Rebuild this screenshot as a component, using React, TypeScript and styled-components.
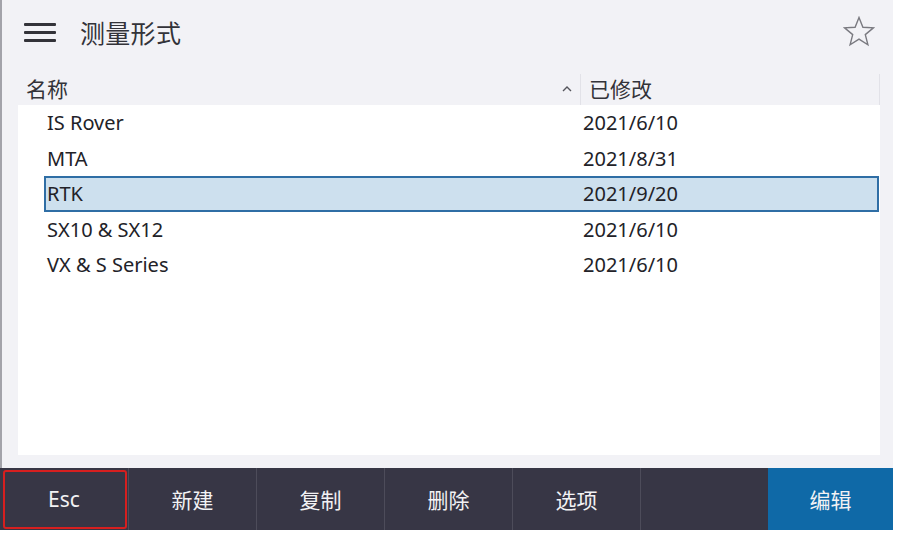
import React from "react";
import styled, { createGlobalStyle } from "styled-components";

const GlobalStyle = createGlobalStyle`
  html, body {
    margin: 0;
    padding: 0;
    background: #ffffff;
  }
  body {
    font-family: "Noto Sans", "Noto Sans CJK SC", sans-serif;
  }
`;

const Frame = styled.div`
  width: 893px;
  height: 530px;
  display: flex;
  flex-direction: column;
  background: #f2f2f6;
`;

const Upper = styled.div`
  flex: 1;
  display: flex;
  flex-direction: column;
  border-left: 2px solid #a3a3aa;
  padding-bottom: 13px;
  min-height: 0;
`;

const TitleBar = styled.div`
  height: 74px;
  display: flex;
  align-items: center;
  padding: 0 18px 10px 22px;
  box-sizing: border-box;
`;

const MenuButton = styled.div`
  width: 32px;
  display: flex;
  flex-direction: column;
  gap: 5px;
  margin-right: 24px;

  > span {
    height: 3px;
    background: #333339;
    border-radius: 1px;
  }
`;

const Title = styled.div`
  flex: 1;
  font-size: 25px;
  color: #333339;
  letter-spacing: 0.3px;
`;

const StarButton = styled.div`
  width: 32px;
  height: 32px;
  margin-bottom: 2px;
  display: flex;
  align-items: center;
  justify-content: center;
`;

const ListPanel = styled.div`
  flex: 1;
  margin: 0 13px 0 16px;
  display: flex;
  flex-direction: column;
  min-height: 0;
`;

const HeaderRow = styled.div`
  height: 31px;
  display: grid;
  grid-template-columns: 562px 1fr;
  border-right: 1px solid #e2e2e8;
  color: #333339;
  font-size: 21px;
`;

const HeaderCell = styled.div<{ $divider?: boolean }>`
  display: flex;
  align-items: center;
  padding-left: 8px;
  border-left: ${(p) => (p.$divider ? "1px solid #e2e2e8" : "none")};
  position: relative;
  line-height: 1;
`;

const SortCaret = styled.span`
  position: absolute;
  right: 8px;
  top: 10px;
  width: 10px;
  height: 10px;
  display: flex;
`;

const ListBody = styled.div`
  flex: 1;
  background: #ffffff;
  padding: 0 1px 0 26px;
  display: flex;
  flex-direction: column;
`;

const Row = styled.div<{ $selected?: boolean }>`
  height: 35.5px;
  flex: none;
  box-sizing: border-box;
  display: grid;
  grid-template-columns: 536px 1fr;
  align-items: center;
  font-size: 20px;
  color: #222228;
  border: 2px solid ${(p) => (p.$selected ? "#2f6ea5" : "transparent")};
  background: ${(p) => (p.$selected ? "#cde0ee" : "transparent")};
`;

const Cell = styled.div`
  padding-left: 1px;
  white-space: nowrap;
`;

const Toolbar = styled.div`
  height: 62px;
  display: grid;
  grid-template-columns: repeat(6, 1fr) 125px;
  background: #373645;
`;

const ToolButton = styled.div<{ $primary?: boolean; $focused?: boolean }>`
  display: flex;
  align-items: center;
  justify-content: center;
  color: #f2f2f4;
  font-size: 21px;
  background: ${(p) => (p.$primary ? "#0f69a7" : "#373645")};
  border-left: ${(p) => (p.$primary ? "none" : "1px solid #4d4c5a")};
  box-sizing: border-box;
  position: relative;

  &:first-child {
    border-left: none;
  }

  ${(p) =>
    p.$focused &&
    `
    &::after {
      content: "";
      position: absolute;
      left: 3px;
      right: 1px;
      top: 2px;
      bottom: 1px;
      border: 2px solid #d61f1f;
      border-radius: 3px;
    }
  `}
`;

const rows = [
  { name: "IS Rover", date: "2021/6/10" },
  { name: "MTA", date: "2021/8/31" },
  { name: "RTK", date: "2021/9/20", selected: true },
  { name: "SX10 & SX12", date: "2021/6/10" },
  { name: "VX & S Series", date: "2021/6/10" },
];

const tools = [
  { label: "Esc", focused: true },
  { label: "新建" },
  { label: "复制" },
  { label: "删除" },
  { label: "选项" },
  { label: "" },
  { label: "编辑", primary: true },
];

const Star = () => (
  <svg width="32" height="31" viewBox="0 0 32 31">
    <path
      d="M16 1.5 L19.9 11.3 L30.4 11.9 L22.3 18.6 L24.9 28.8 L16 23.1 L7.1 28.8 L9.7 18.6 L1.6 11.9 L12.1 11.3 Z"
      fill="none"
      stroke="#7a7a80"
      strokeWidth="1.4"
      strokeLinejoin="miter"
    />
  </svg>
);

const Caret = () => (
  <svg width="10" height="10" viewBox="0 0 10 10">
    <path d="M1 7 L5 3 L9 7" fill="none" stroke="#55555c" strokeWidth="1.4" />
  </svg>
);

const App: React.FC = () => {
  return (
    <>
      <GlobalStyle />
      <Frame>
        <Upper>
          <TitleBar>
            <MenuButton>
              <span />
              <span />
              <span />
            </MenuButton>
            <Title>测量形式</Title>
            <StarButton>
              <Star />
            </StarButton>
          </TitleBar>
          <ListPanel>
            <HeaderRow>
              <HeaderCell>
                名称
                <SortCaret>
                  <Caret />
                </SortCaret>
              </HeaderCell>
              <HeaderCell $divider>已修改</HeaderCell>
            </HeaderRow>
            <ListBody>
              {rows.map((r) => (
                <Row key={r.name} $selected={r.selected}>
                  <Cell>{r.name}</Cell>
                  <Cell>{r.date}</Cell>
                </Row>
              ))}
            </ListBody>
          </ListPanel>
        </Upper>
        <Toolbar>
          {tools.map((t, i) => (
            <ToolButton key={i} $primary={t.primary} $focused={t.focused}>
              {t.label}
            </ToolButton>
          ))}
        </Toolbar>
      </Frame>
    </>
  );
};

export default App;
